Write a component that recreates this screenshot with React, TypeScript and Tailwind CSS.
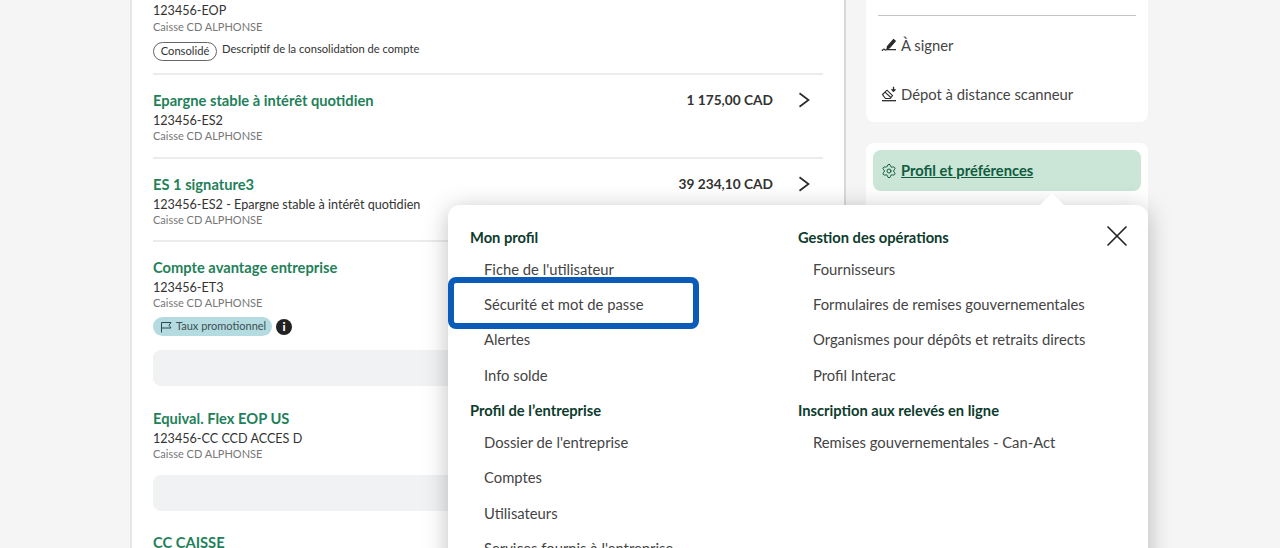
import { Settings, X } from 'lucide-react';

function AccountHead({ name, amount }: { name: string; amount?: string }) {
  return (
    <div className="flex h-[20px] items-center justify-between">
      <span className="text-[14.7px] font-bold text-[#1f8159]">{name}</span>
      {amount && (
        <div className="flex items-center">
          <span className="text-[13.7px] font-bold text-[#333]">{amount}</span>
          <svg viewBox="0 0 12 16" className="ml-[25px] mr-[13px] h-[16px] w-[12px] text-[#2b2b2b]" fill="none" stroke="currentColor" strokeWidth="1.7">
            <path d="M1.5 1.2 10.5 8l-9 6.8" />
          </svg>
        </div>
      )}
    </div>
  );
}

function AccountLines({ id }: { id: string }) {
  return (
    <>
      <p className="mt-[3px] h-[15px] text-[12.6px] leading-[16px] text-[#333]">{id}</p>
      <p className="h-[15px] text-[11px] leading-[15px] text-[#777]">Caisse CD ALPHONSE</p>
    </>
  );
}

function Divider() {
  return <div className="h-[2px] bg-[#ececec]" />;
}

function MenuHead({ children }: { children: string }) {
  return <h3 className="flex h-[32px] items-start text-[14.7px] font-bold leading-[20px] text-[#0d3b2c]">{children}</h3>;
}

function MenuItem({ children }: { children: string }) {
  return <a className="flex h-[35.4px] items-start pl-[14px] text-[14.8px] leading-[21px] text-[#444]">{children}</a>;
}

function SignIcon() {
  return (
    <svg viewBox="0 0 16 16" className="h-[16px] w-[16px] text-[#2b2b2b]" fill="none" stroke="currentColor" strokeWidth="1.2">
      <path d="M6.5 9.5 12.5 2.5l1.8 1.5-6 7-2.3.6z" fill="currentColor" />
      <path d="M1 14c1-1.8 2-2.4 2.6-1.6.5.7 1 .9 1.8.4.6-.3 1.2-.3 1.8-.2H15" />
    </svg>
  );
}

function ScanIcon() {
  return (
    <svg viewBox="0 0 16 16" className="h-[16px] w-[16px] text-[#2b2b2b]" fill="none" stroke="currentColor" strokeWidth="1.1">
      <path d="M1.5 8.5 6 4.2l5.500 5.300-2.200 3H4.500z" />
      <path d="M4 6.200 9.800 11.500" />
      <path d="M12.500.8v4.400M10.500 3.300l2 2 2-2" strokeWidth="1.3" />
      <path d="M1 14.700h14" strokeWidth="1.3" />
    </svg>
  );
}

function PennantIcon() {
  return (
    <svg viewBox="0 0 12 12" className="mr-[4px] h-[12px] w-[12px] text-[#2b4a50]" fill="none" stroke="currentColor" strokeWidth="1">
      <path d="M1.500 11.500V1.500h9.500L9 4.300l2 2.700H1.500" />
    </svg>
  );
}

export default function App() {
  return (
    <div className="relative h-[548px] w-[1280px] overflow-hidden bg-[#f5f5f5] font-['Lato',sans-serif]">
      <div className="flex h-full pl-[130px]">
        {/* Comptes */}
        <main className="h-full w-[716px] border-x-2 border-l-[#e6e6e6] border-r-[#d9d9d9] bg-white px-[21px] pt-[3px]">
          <p className="h-[16px] text-[12.6px] leading-[16px] text-[#333]">123456-EOP</p>
          <p className="h-[15px] text-[11px] leading-[15px] text-[#777]">Caisse CD ALPHONSE</p>
          <div className="mt-[8px] flex items-center">
            <span className="flex h-[19px] w-[64px] items-center justify-center rounded-full border border-[#666] text-[11.2px] text-[#333]">Consolidé</span>
            <span className="ml-[5px] -translate-y-[2px] text-[11.2px] text-[#333]">Descriptif de la consolidation de compte</span>
          </div>
          <div className="mt-[12px]"><Divider /></div>

          <div className="mt-[15px]"><AccountHead name="Epargne stable à intérêt quotidien" amount="1 175,00 CAD" /></div>
          <AccountLines id="123456-ES2" />
          <div className="mt-[14px]"><Divider /></div>

          <div className="mt-[15px]"><AccountHead name="ES 1 signature3" amount="39 234,10 CAD" /></div>
          <AccountLines id="123456-ES2 - Epargne stable à intérêt quotidien" />
          <div className="mt-[13px]"><Divider /></div>

          <div className="mt-[15px]"><AccountHead name="Compte avantage entreprise" /></div>
          <AccountLines id="123456-ET3" />
          <div className="mt-[7px] flex items-center">
            <span className="flex h-[19px] w-[119px] items-center rounded-full bg-[#b3dbe0] pl-[7px] text-[11px] text-[#3d4f52]">
              <PennantIcon />
              Taux promotionnel
            </span>
            <span className="ml-[4px] flex h-[16px] w-[16px] items-center justify-center rounded-full bg-[#222] text-[12px] font-black text-white">i</span>
          </div>
          <div className="mt-[14px] h-[36px] rounded-[8px] bg-[#f1f2f3]" />

          <div className="mt-[22px]"><AccountHead name="Equival. Flex EOP US" /></div>
          <AccountLines id="123456-CC CCD ACCES D" />
          <div className="mt-[14px] h-[36px] rounded-[8px] bg-[#f1f2f3]" />

          <div className="mt-[21px]"><AccountHead name="CC CAISSE" /></div>
        </main>

        {/* Colonne de droite */}
        <aside className="ml-[20px] flex h-full w-[282px] flex-col gap-[21px]">
          <section className="h-[122px] rounded-b-[8px] bg-white px-[12px] pt-[15px]">
            <div className="h-px bg-[#c4c4c4]" />
            <a className="mt-[19px] flex h-[20px] items-center gap-[4px] pl-[3px] text-[14.8px] text-[#444]"><SignIcon />À signer</a>
            <a className="mt-[29px] flex h-[20px] items-center gap-[4px] pl-[3px] text-[14.8px] text-[#444]"><ScanIcon />Dépot à distance scanneur</a>
          </section>
          <section className="flex-1 rounded-t-[8px] bg-white px-[7px] pt-[7px]">
            <a className="flex h-[41px] items-center rounded-[8px] bg-[#cbe5d6] pl-[8px] text-[14.7px] font-bold text-[#0f5c3f] underline">
              <Settings className="mr-[4px] h-[16px] w-[16px]" strokeWidth={1.5} />
              Profil et préférences
            </a>
          </section>
        </aside>
      </div>

      {/* Menu Profil et préférences */}
      <div className="absolute left-[448px] top-[205px] flex h-[370px] w-[700px] rounded-[12px] bg-white pl-[22px] pt-[21.5px] shadow-[0_4px_24px_rgba(0,0,0,0.25)]">
        <div className="absolute -top-[12px] left-[592px] h-0 w-0 border-x-[12px] border-b-[12px] border-x-transparent border-b-white" />
        <div className="w-[328px]">
          <MenuHead>Mon profil</MenuHead>
          <MenuItem>Fiche de l'utilisateur</MenuItem>
          <MenuItem>Sécurité et mot de passe</MenuItem>
          <MenuItem>Alertes</MenuItem>
          <MenuItem>Info solde</MenuItem>
          <MenuHead>Profil de l’entreprise</MenuHead>
          <MenuItem>Dossier de l'entreprise</MenuItem>
          <MenuItem>Comptes</MenuItem>
          <MenuItem>Utilisateurs</MenuItem>
          <MenuItem>Services fournis à l'entreprise</MenuItem>
        </div>
        <div className="flex-1">
          <MenuHead>Gestion des opérations</MenuHead>
          <div className="pl-px">
            <MenuItem>Fournisseurs</MenuItem>
            <MenuItem>Formulaires de remises gouvernementales</MenuItem>
            <MenuItem>Organismes pour dépôts et retraits directs</MenuItem>
            <MenuItem>Profil Interac</MenuItem>
          </div>
          <MenuHead>Inscription aux relevés en ligne</MenuHead>
          <div className="pl-px">
            <MenuItem>Remises gouvernementales - Can-Act</MenuItem>
          </div>
        </div>
        <X className="absolute right-[13px] top-[13px] h-[36px] w-[36px] text-[#222]" strokeWidth={1.1} />
        {/* Surlignage de l'élément */}
        <div className="absolute left-0 top-[72px] h-[52px] w-[251px] rounded-[8px] border-[6px] border-[#0b5cb8]" />
      </div>
    </div>
  );
}
